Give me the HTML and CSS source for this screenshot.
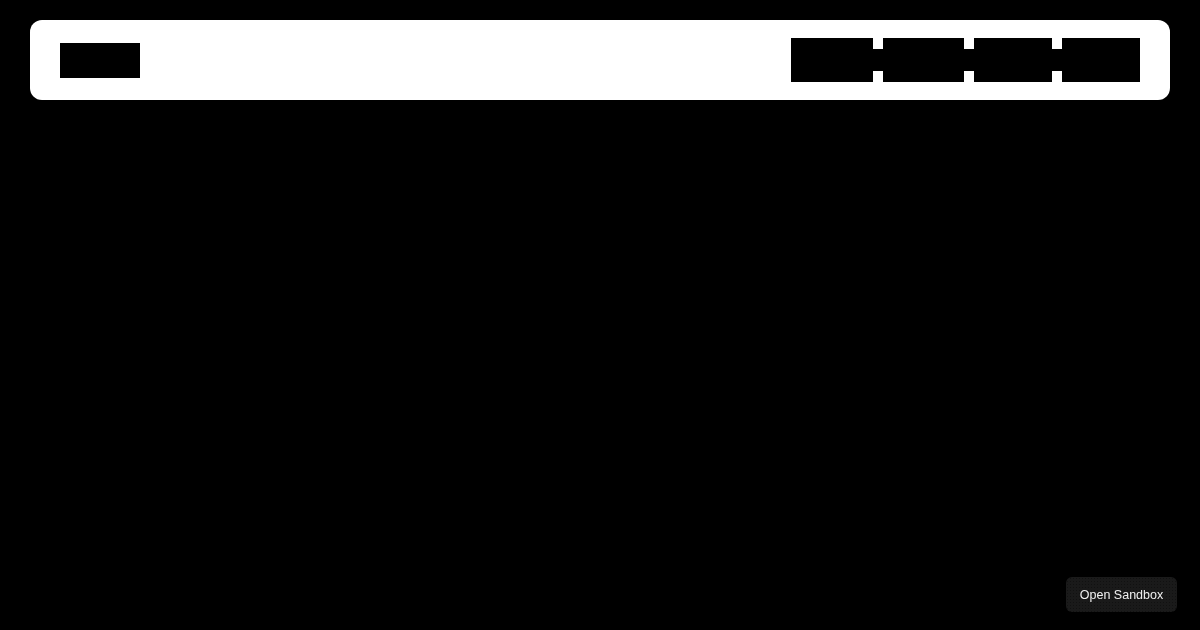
FILE: index.html
```html
<!DOCTYPE html>
<html>
<head>
<meta charset="utf-8">
<link rel="stylesheet" href="styles.css">
</head>
<body>
<div class="page">
  <header class="header">
    <div class="logo"></div>
    <nav class="nav">
      <a class="nav-item w1"></a>
      <a class="nav-item w2"></a>
      <a class="nav-item w3"></a>
      <a class="nav-item w4"></a>
    </nav>
  </header>
</div>
<button class="sandbox">Open Sandbox</button>
</body>
</html>
```
FILE: styles.css
```css
html, body {
  margin: 0;
  padding: 0;
  background: #000;
  width: 1200px;
  height: 630px;
  overflow: hidden;
}
.page {
  padding: 20px 30px;
}
.header {
  height: 80px;
  background: #fff;
  border-radius: 12px;
  display: flex;
  align-items: center;
  justify-content: space-between;
  padding: 0 30px;
  box-sizing: border-box;
}
.logo {
  width: 80px;
  height: 35px;
  background: #000;
  margin-top: 1px;
}
.nav {
  display: flex;
  align-items: center;
  gap: 10px;
  height: 22px;
  background: #000;
}
.nav-item {
  display: block;
  height: 44px;
  background: #000;
}
.w1 { width: 82px; }
.w2 { width: 81px; }
.w3 { width: 78px; }
.w4 { width: 78px; }
.sandbox {
  position: fixed;
  right: 23px;
  bottom: 18px;
  width: 111px;
  height: 35px;
  background-color: #1a1a1a;
  background-image: radial-gradient(circle, #111 0.6px, transparent 0.8px);
  background-size: 3px 3px;
  border: none;
  border-radius: 6px;
  color: #f0f0f0;
  font-family: "Liberation Sans", Arial, sans-serif;
  font-size: 12.5px;
  padding: 0;
}
```
